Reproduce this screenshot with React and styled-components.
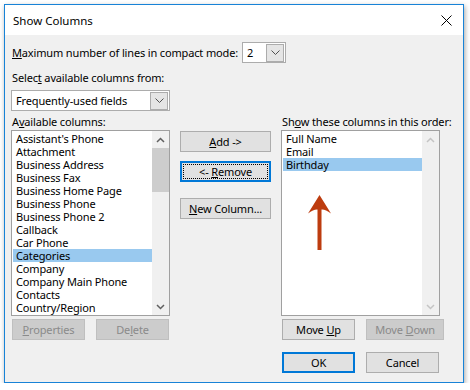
import React from 'react';
import styled, { createGlobalStyle } from 'styled-components';

const Global = createGlobalStyle`
    body {
        margin: 0;
        background: #fff;
        font-family: "Noto Sans", "Liberation Sans", sans-serif;
        font-size: 11px;
        letter-spacing: -0.15px;
        color: #000;
    }
`

const Dialog = styled.div`
    box-sizing: border-box;
    margin: 4px 0 0 4px;
    width: 460px;
    height: 379px;
    border: 1px solid #1883d7;
    display: flex;
    flex-direction: column;
    box-shadow: 1px 2px 5px rgba(0, 0, 0, 0.35);
`
const TitleBar = styled.div`
    height: 30px;
    background: #fff;
    display: flex;
    align-items: center;
    justify-content: space-between;
    padding: 0 11px 0 8px;
`
const Title = styled.span`
    font-size: 11.5px;
    letter-spacing: 0;
`
const Body = styled.div`
    flex: 1;
    background: #f0f0f0;
    padding: 7px 6px 0 6px;
`
const Row = styled.div`
    display: flex;
    align-items: center;
    gap: ${p => p.gap || 0}px;
`
const Label = styled.div`
    height: 15px;
    line-height: 15px;
    padding-left: 1px;
    margin-top: ${p => p.top || 0}px;
    margin-bottom: ${p => p.bottom || 0}px;
    white-space: nowrap;
`
const Key = styled.span`
    text-decoration: underline;
`
const Combo = styled.div`
    box-sizing: border-box;
    width: ${p => p.width}px;
    height: 21px;
    background: #fff;
    border: 1px solid #acacac;
    display: flex;
    align-items: center;
    justify-content: space-between;
    padding: 0 1px 0 4px;
`
const ComboButton = styled.div`
    box-sizing: border-box;
    width: 18px;
    height: 18px;
    background: #e5e5e5;
    border: 1px solid #acacac;
    display: flex;
    align-items: center;
    justify-content: center;
`
const Grid = styled.div`
    display: grid;
    grid-template-columns: 159px 91px 159px;
    grid-template-rows: auto 186px auto auto;
    column-gap: 10px;
`
const ListBox = styled.div`
    box-sizing: border-box;
    position: relative;
    height: 186px;
    margin-top: 1px;
    background: #fff;
    border: 1px solid #a0a0a0;
    display: flex;
    padding: 1px 0 0 1px;
    overflow: hidden;
`
const Items = styled.div`
    flex: 1;
`
const Item = styled.div`
    height: 13px;
    line-height: 13px;
    padding-left: 3px;
    white-space: nowrap;
    background: ${p => (p.selected ? '#99c9ef' : 'transparent')};
`
const ScrollBar = styled.div`
    width: 17px;
    margin-top: -1px;
    background: #f0f0f0;
    display: flex;
    flex-direction: column;
`
const ScrollArrow = styled.div`
    height: 17px;
    display: flex;
    align-items: center;
    justify-content: center;
`
const Thumb = styled.div`
    height: 44px;
    background: #cdcdcd;
`
const Spacer = styled.div`
    flex: 1;
`
const Middle = styled.div`
    grid-column: 2;
    grid-row: 2;
    display: flex;
    flex-direction: column;
    padding-top: 2px;
`
const ButtonBox = styled.div`
    box-sizing: border-box;
    width: ${p => p.width || 73}px;
    height: 21px;
    margin-top: ${p => p.top || 0}px;
    margin-right: ${p => p.right || 0}px;
    display: flex;
    align-items: center;
    justify-content: center;
    position: relative;
    background: ${p => (p.disabled ? '#cccccc' : '#e1e1e1')};
    color: ${p => (p.disabled ? '#8a8a8a' : '#000')};
    border: ${p => (p.focused ? '2px solid #0078d7' : p.disabled ? '1px solid #bfbfbf' : '1px solid #adadad')};
    white-space: pre;
`
const FocusRing = styled.div`
    position: absolute;
    inset: 1px;
    border: 1px dotted #000;
`
const ButtonRow = styled.div`
    display: flex;
    justify-content: space-between;
    margin-top: 4px;
    padding-left: ${p => p.inset || 0}px;
    padding-right: ${p => p.right || 0}px;
`
const Footer = styled.div`
    grid-column: 3;
    display: flex;
    gap: 11px;
    margin-top: 12px;
    padding-left: 1px;
`
const Annotation = styled.svg`
    position: absolute;
    left: 25px;
    top: 63px;
`

const Button = ({ children, ring, ...rest }) => (
    <ButtonBox {...rest}>
        {ring && <FocusRing />}
        <span>{children}</span>
    </ButtonBox>
)

const Chevron = ({ up, color = '#606060' }) => (
    <svg width="9" height="6" viewBox="0 0 9 6">
        <polyline
            points={up ? '1,5 4.5,1.5 8,5' : '1,1 4.5,4.5 8,1'}
            fill="none"
            stroke={color}
            strokeWidth="1.5"
        />
    </svg>
)

const ComboChevron = () => (
    <svg width="9" height="5" viewBox="0 0 9 5">
        <polyline points="0.5,0.5 4.5,4.5 8.5,0.5" fill="none" stroke="#505050" strokeWidth="1" />
    </svg>
)

const available = [
    "Assistant's Phone",
    'Attachment',
    'Business Address',
    'Business Fax',
    'Business Home Page',
    'Business Phone',
    'Business Phone 2',
    'Callback',
    'Car Phone',
    'Categories',
    'Company',
    'Company Main Phone',
    'Contacts',
    'Country/Region',
]

const shown = ['Full Name', 'Email', 'Birthday']

const App = () => {
    return (
        <>
            <Global />
            <Dialog>
                <TitleBar>
                    <Title>Show Columns</Title>
                    <svg width="11" height="11" viewBox="0 0 11 11">
                        <path d="M0.5 0.5 L10.5 10.5 M10.5 0.5 L0.5 10.5" stroke="#000" strokeWidth="1" />
                    </svg>
                </TitleBar>
                <Body>
                    <Row gap={4}>
                        <Label><Key>M</Key>aximum number of lines in compact mode:</Label>
                        <Combo width={44}>
                            <span>2</span>
                            <ComboButton><ComboChevron /></ComboButton>
                        </Combo>
                    </Row>
                    <Label top={7} bottom={5}>Selec<Key>t</Key> available columns from:</Label>
                    <Combo width={159}>
                        <span>Frequently-used fields</span>
                        <ComboButton><ComboChevron /></ComboButton>
                    </Combo>
                    <Grid>
                        <Label top={3}>A<Key>v</Key>ailable columns:</Label>
                        <div />
                        <Label top={3}>Sh<Key>o</Key>w these columns in this order:</Label>

                        <ListBox>
                            <Items>
                                {available.map(name => (
                                    <Item key={name} selected={name === 'Categories'}>{name}</Item>
                                ))}
                            </Items>
                            <ScrollBar>
                                <ScrollArrow><Chevron up /></ScrollArrow>
                                <Thumb />
                                <Spacer />
                                <ScrollArrow><Chevron /></ScrollArrow>
                            </ScrollBar>
                        </ListBox>
                        <Middle>
                            <Button width={91}><Key>A</Key>dd -&gt;</Button>
                            <Button width={91} top={9} focused ring>&lt;- <Key>R</Key>emove</Button>
                            <Button width={91} top={16}><Key>N</Key>ew Column...</Button>
                        </Middle>
                        <ListBox>
                            <Items>
                                {shown.map(name => (
                                    <Item key={name} selected={name === 'Birthday'}>{name}</Item>
                                ))}
                            </Items>
                            <ScrollBar>
                                <ScrollArrow><Chevron up color="#c4c4c4" /></ScrollArrow>
                                <Spacer />
                                <ScrollArrow><Chevron color="#c4c4c4" /></ScrollArrow>
                            </ScrollBar>
                            <Annotation width="26" height="56" viewBox="0 0 26 56">
                                <path
                                    d="M12.5 1 L24 19.5 Q18 15 14.5 15.5 L14.5 56 L10.5 56 L10.5 15.5 Q7 15 1 19.5 Z"
                                    fill="#bd3c0f"
                                />
                            </Annotation>
                        </ListBox>

                        <ButtonRow inset={1} right={1}>
                            <Button disabled><Key>P</Key>roperties</Button>
                            <Button disabled>De<Key>l</Key>ete</Button>
                        </ButtonRow>
                        <div />
                        <ButtonRow inset={1}>
                            <Button>Move <Key>U</Key>p</Button>
                            <Button width={78} right={-4} disabled>Move <Key>D</Key>own</Button>
                        </ButtonRow>

                        <Footer>
                            <Button focused>OK</Button>
                            <Button>Cancel</Button>
                        </Footer>
                    </Grid>
                </Body>
            </Dialog>
        </>
    );
}

export default App;
